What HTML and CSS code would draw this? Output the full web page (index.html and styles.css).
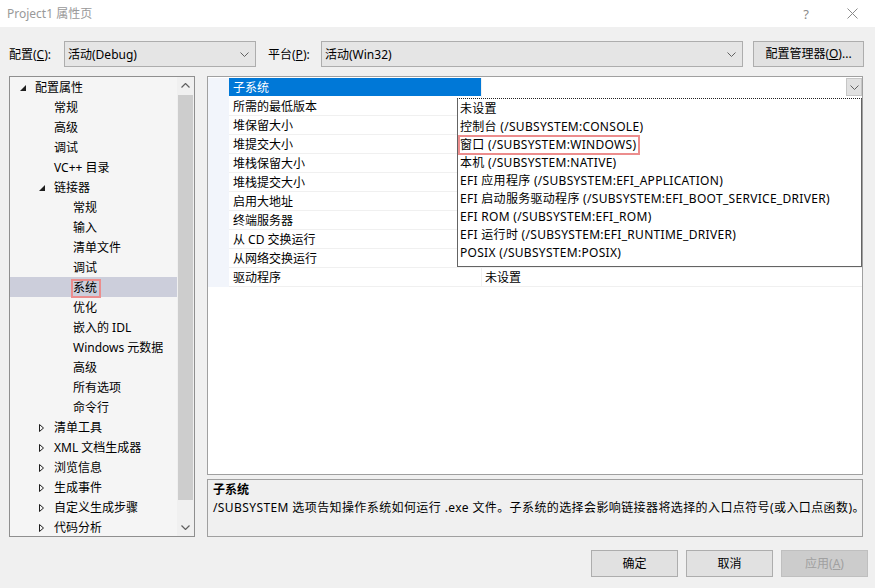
FILE: index.html
```html
<!DOCTYPE html>
<html lang="zh-CN">
<head>
<meta charset="utf-8">
<title>Project1 属性页</title>
<link rel="stylesheet" href="styles.css">
</head>
<body>
<div class="titlebar">
  <span class="title">Project1 属性页</span>
  <span class="capbtn help">?</span>
  <span class="capbtn close"><svg width="11" height="11" viewBox="0 0 11 11"><path d="M0.5 0.5L10.5 10.5M10.5 0.5L0.5 10.5" stroke="#8a8a8a" stroke-width="1" fill="none"/></svg></span>
</div>

<div class="toolbar">
  <span class="lbl lbl-conf">配置(<u>C</u>):</span>
  <div class="combo combo-conf"><span class="combo-text">活动(Debug)</span><svg class="chev" width="9" height="5" viewBox="0 0 9 5"><path d="M0.5 0.5L4.5 4.5L8.5 0.5" stroke="#606060" fill="none"/></svg></div>
  <span class="lbl lbl-plat">平台(<u>P</u>):</span>
  <div class="combo combo-plat"><span class="combo-text">活动(Win32)</span><svg class="chev" width="9" height="5" viewBox="0 0 9 5"><path d="M0.5 0.5L4.5 4.5L8.5 0.5" stroke="#606060" fill="none"/></svg></div>
  <div class="btn btn-mgr">配置管理器(<u>O</u>)...</div>
</div>

<div class="main">
  <div class="tree">
    <div class="tree-rows">
      <div class="trow l0"><span class="exp"><svg width="6" height="6" viewBox="0 0 6 6"><path d="M6 0L6 6L0 6Z" fill="#1e1e1e"/></svg></span><span class="ttext">配置属性</span></div>
      <div class="trow l1"><span class="exp"></span><span class="ttext">常规</span></div>
      <div class="trow l1"><span class="exp"></span><span class="ttext">高级</span></div>
      <div class="trow l1"><span class="exp"></span><span class="ttext">调试</span></div>
      <div class="trow l1"><span class="exp"></span><span class="ttext">VC++ 目录</span></div>
      <div class="trow l1"><span class="exp"><svg width="6" height="6" viewBox="0 0 6 6"><path d="M6 0L6 6L0 6Z" fill="#1e1e1e"/></svg></span><span class="ttext">链接器</span></div>
      <div class="trow l2"><span class="exp"></span><span class="ttext">常规</span></div>
      <div class="trow l2"><span class="exp"></span><span class="ttext">输入</span></div>
      <div class="trow l2"><span class="exp"></span><span class="ttext">清单文件</span></div>
      <div class="trow l2"><span class="exp"></span><span class="ttext">调试</span></div>
      <div class="trow l2 sel"><span class="exp"></span><span class="ttext mark">系统</span></div>
      <div class="trow l2"><span class="exp"></span><span class="ttext">优化</span></div>
      <div class="trow l2"><span class="exp"></span><span class="ttext">嵌入的 IDL</span></div>
      <div class="trow l2"><span class="exp"></span><span class="ttext">Windows 元数据</span></div>
      <div class="trow l2"><span class="exp"></span><span class="ttext">高级</span></div>
      <div class="trow l2"><span class="exp"></span><span class="ttext">所有选项</span></div>
      <div class="trow l2"><span class="exp"></span><span class="ttext">命令行</span></div>
      <div class="trow l1"><span class="exp"><svg width="6" height="8" viewBox="0 0 6 8"><path d="M0.5 0.5L4.5 4L0.5 7.5Z" stroke="#1e1e1e" fill="none"/></svg></span><span class="ttext">清单工具</span></div>
      <div class="trow l1"><span class="exp"><svg width="6" height="8" viewBox="0 0 6 8"><path d="M0.5 0.5L4.5 4L0.5 7.5Z" stroke="#1e1e1e" fill="none"/></svg></span><span class="ttext">XML 文档生成器</span></div>
      <div class="trow l1"><span class="exp"><svg width="6" height="8" viewBox="0 0 6 8"><path d="M0.5 0.5L4.5 4L0.5 7.5Z" stroke="#1e1e1e" fill="none"/></svg></span><span class="ttext">浏览信息</span></div>
      <div class="trow l1"><span class="exp"><svg width="6" height="8" viewBox="0 0 6 8"><path d="M0.5 0.5L4.5 4L0.5 7.5Z" stroke="#1e1e1e" fill="none"/></svg></span><span class="ttext">生成事件</span></div>
      <div class="trow l1"><span class="exp"><svg width="6" height="8" viewBox="0 0 6 8"><path d="M0.5 0.5L4.5 4L0.5 7.5Z" stroke="#1e1e1e" fill="none"/></svg></span><span class="ttext">自定义生成步骤</span></div>
      <div class="trow l1"><span class="exp"><svg width="6" height="8" viewBox="0 0 6 8"><path d="M0.5 0.5L4.5 4L0.5 7.5Z" stroke="#1e1e1e" fill="none"/></svg></span><span class="ttext">代码分析</span></div>
    </div>
    <div class="vscroll">
      <div class="sarrow"><svg width="9" height="5" viewBox="0 0 9 5"><path d="M0.5 4.5L4.5 0.5L8.5 4.5" stroke="#606060" stroke-width="1.2" fill="none"/></svg></div>
      <div class="strack"><div class="sthumb"></div></div>
      <div class="sarrow"><svg width="9" height="5" viewBox="0 0 9 5"><path d="M0.5 0.5L4.5 4.5L8.5 0.5" stroke="#606060" stroke-width="1.2" fill="none"/></svg></div>
    </div>
  </div>

  <div class="right">
    <div class="grid">
      <div class="grow first">
        <span class="gut"></span>
        <span class="gname active">子系统</span>
        <span class="gsep"></span>
        <span class="gval combo-cell"><span class="cfield"></span><span class="cbtn"><svg width="9" height="5" viewBox="0 0 9 5"><path d="M0.5 0.5L4.5 4.5L8.5 0.5" stroke="#606060" fill="none"/></svg></span></span>
      </div>
      <div class="grow"><span class="gut"></span><span class="gname">所需的最低版本</span><span class="gsep"></span><span class="gval"></span></div>
      <div class="grow"><span class="gut"></span><span class="gname">堆保留大小</span><span class="gsep"></span><span class="gval"></span></div>
      <div class="grow"><span class="gut"></span><span class="gname">堆提交大小</span><span class="gsep"></span><span class="gval"></span></div>
      <div class="grow"><span class="gut"></span><span class="gname">堆栈保留大小</span><span class="gsep"></span><span class="gval"></span></div>
      <div class="grow"><span class="gut"></span><span class="gname">堆栈提交大小</span><span class="gsep"></span><span class="gval"></span></div>
      <div class="grow"><span class="gut"></span><span class="gname">启用大地址</span><span class="gsep"></span><span class="gval"></span></div>
      <div class="grow"><span class="gut"></span><span class="gname">终端服务器</span><span class="gsep"></span><span class="gval"></span></div>
      <div class="grow"><span class="gut"></span><span class="gname">从 CD 交换运行</span><span class="gsep"></span><span class="gval"></span></div>
      <div class="grow"><span class="gut"></span><span class="gname">从网络交换运行</span><span class="gsep"></span><span class="gval"></span></div>
      <div class="grow"><span class="gut"></span><span class="gname">驱动程序</span><span class="gsep"></span><span class="gval">未设置</span></div>

      <div class="popup">
        <div class="pitem">未设置</div>
        <div class="pitem">控制台 (/SUBSYSTEM:CONSOLE)</div>
        <div class="pitem"><span class="mark">窗口 (/SUBSYSTEM:WINDOWS)</span></div>
        <div class="pitem">本机 (/SUBSYSTEM:NATIVE)</div>
        <div class="pitem">EFI 应用程序 (/SUBSYSTEM:EFI_APPLICATION)</div>
        <div class="pitem">EFI 启动服务驱动程序 (/SUBSYSTEM:EFI_BOOT_SERVICE_DRIVER)</div>
        <div class="pitem">EFI ROM (/SUBSYSTEM:EFI_ROM)</div>
        <div class="pitem">EFI 运行时 (/SUBSYSTEM:EFI_RUNTIME_DRIVER)</div>
        <div class="pitem">POSIX (/SUBSYSTEM:POSIX)</div>
      </div>
    </div>
    <div class="desc">
      <div class="desc-title">子系统</div>
      <div class="desc-text">/SUBSYSTEM 选项告知操作系统如何运行 .exe 文件。子系统的选择会影响链接器将选择的入口点符号(或入口点函数)。</div>
    </div>
  </div>
</div>

<div class="footer">
  <div class="btn fbtn">确定</div>
  <div class="btn fbtn">取消</div>
  <div class="btn fbtn disabled">应用(<u>A</u>)</div>
</div>
</body>
</html>
```

FILE: styles.css
```css
* { box-sizing: border-box; }
html, body { margin: 0; padding: 0; }
body {
  width: 875px;
  height: 588px;
  overflow: hidden;
  background: #f0f0f0;
  font-family: "Noto Sans", "Noto Sans CJK SC", sans-serif;
  font-size: 12px;
  line-height: 16px;
  color: #000;
}

/* title bar */
.titlebar {
  height: 27px;
  background: #fff;
  display: flex;
  align-items: center;
  padding-left: 7px;
  color: #999;
}
.title { flex: 1; font-size: 12px; }
.capbtn {
  width: 46px;
  height: 27px;
  display: flex;
  align-items: center;
  justify-content: center;
}
.help { font-size: 13px; color: #8a8a8a; }

/* toolbar */
.toolbar {
  display: flex;
  align-items: center;
  height: 26px;
  margin-top: 14px;
  padding-left: 9px;
}
.lbl { white-space: nowrap; padding-top: 1px; }
.lbl-conf { width: 55px; }
.lbl-plat { width: 53px; margin-left: 12px; }
.combo {
  height: 26px;
  background: #e5e5e5;
  border: 1px solid #adadad;
  display: flex;
  align-items: center;
  padding-left: 3px;
  padding-right: 6px;
}
.combo-text { flex: 1; padding-top: 1px; }
.combo-conf { width: 192px; }
.combo-plat { width: 422px; }
.btn {
  display: flex;
  align-items: center;
  justify-content: center;
  background: #e1e1e1;
  border: 1px solid #adadad;
}
.btn-mgr { width: 111px; height: 26px; margin-left: 10px; }

/* main */
.main {
  display: flex;
  margin-top: 9px;
  height: 461px;
  padding-left: 9px;
  gap: 12px;
}

.tree {
  width: 186px;
  height: 461px;
  border: 1px solid #8f8f8f;
  background: #f5f5f5;
  display: flex;
  overflow: hidden;
}
.tree-rows { width: 167px; }
.trow {
  height: 20px;
  display: flex;
  align-items: center;
  padding-top: 1px;
  white-space: nowrap;
}
.trow.l1 { padding-left: 19px; }
.trow.l2 { padding-left: 38px; }
.trow.sel { background: #cccedb; }
.exp {
  width: 25px;
  display: flex;
  align-items: center;
  padding-left: 10px;
  flex-shrink: 0;
}
.ttext { position: relative; }
.mark { position: relative; }
.mark::after {
  content: "";
  position: absolute;
  left: -2px;
  right: -4px;
  top: -1px;
  bottom: -2px;
  border: 2px solid #ec8d8d;
}
.trow .mark::after { left: -2px; right: -4px; top: -1px; bottom: -2px; }

.vscroll {
  width: 17px;
  display: flex;
  flex-direction: column;
  background: #f0f0f0;
}
.sarrow {
  height: 17px;
  display: flex;
  align-items: center;
  justify-content: center;
}
.strack { flex: 1; padding: 1px 1px 0 1px; }
.sthumb { height: 405px; background: #cdcdcd; }

/* right side */
.right {
  width: 656px;
  display: flex;
  flex-direction: column;
  gap: 4px;
}
.grid {
  position: relative;
  height: 399px;
  border: 1px solid #a0a0a0;
  background: #fff;
  padding-top: 1px;
}
.grow {
  display: flex;
  height: 19px;
}
.gut { width: 21px; background: #f2f5fb; flex-shrink: 0; }
.gname {
  width: 252px;
  padding-left: 4px;
  padding-top: 1px;
  line-height: 17px;
  border-bottom: 1px solid #f0f0f0;
  white-space: nowrap;
}
.gname.active { background: #0078d7; color: #fff; }
.gsep { width: 1px; background: #f0f0f0; }
.gval {
  width: 380px;
  padding-left: 3px;
  padding-top: 1px;
  line-height: 17px;
  border-bottom: 1px solid #f0f0f0;
}
.grow.first .gval { border-bottom: none; }
.grow.first .gname { border-bottom: 1px solid #fff; }
.combo-cell { display: flex; padding-left: 0; padding-top: 0; height: 19px; }
.cfield { flex: 1; background: #fff; }
.cbtn {
  width: 16px;
  height: 18px;
  background: #e1e1e1;
  border: 1px solid #c6c6c6;
  display: flex;
  align-items: center;
  justify-content: center;
}

.popup {
  position: absolute;
  left: 249px;
  top: 21px;
  width: 405px;
  height: 169px;
  background: #fff;
  border: 1px solid #646464;
  border-top: 1px dotted #222;
  padding-left: 2px;
  padding-top: 1px;
  letter-spacing: 0.3px;
}
.pitem {
  height: 18px;
  line-height: 17px;
  white-space: nowrap;
}

.desc {
  height: 58px;
  border: 1px solid #a0a0a0;
  background: #f0f0f0;
  padding: 1px 5px;
}
.desc-title { font-weight: bold; line-height: 18px; }
.desc-text { line-height: 18px; white-space: nowrap; letter-spacing: 0.4px; }

/* footer */
.footer {
  display: flex;
  justify-content: flex-end;
  gap: 8px;
  margin-top: 13px;
  padding-right: 7px;
}
.fbtn { width: 87px; height: 27px; }
.fbtn.disabled { background: #cccccc; border-color: #bfbfbf; color: #a0a0a0; }
```
